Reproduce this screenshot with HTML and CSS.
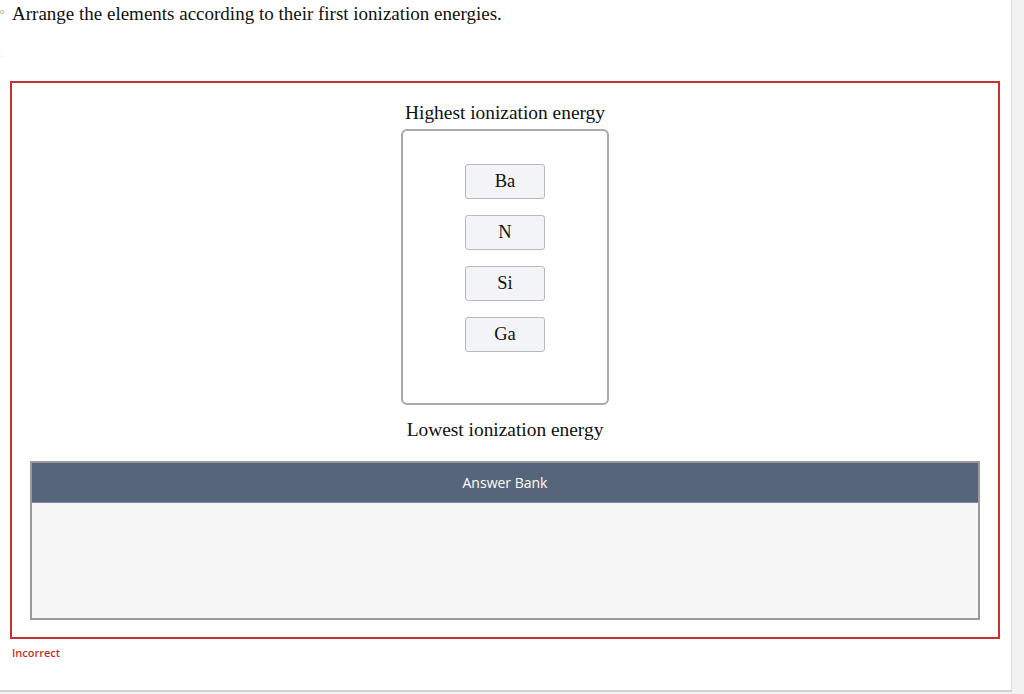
FILE: index.html
```html
<!DOCTYPE html>
<html>
<head>
<meta charset="utf-8">
<link rel="stylesheet" href="styles.css">
</head>
<body>
<div class="page">
  <div class="title"><span class="qnum">o</span>Arrange the elements according to their first ionization energies.</div>
  <div class="side-mark">:</div>
  <div class="question">
    <div class="label">Highest ionization energy</div>
    <div class="target">
      <div class="tile">Ba</div>
      <div class="tile">N</div>
      <div class="tile">Si</div>
      <div class="tile">Ga</div>
    </div>
    <div class="label label-low">Lowest ionization energy</div>
    <div class="bank">
      <div class="bank-head">Answer Bank</div>
      <div class="bank-body"></div>
    </div>
  </div>
  <div class="status">Incorrect</div>
</div>
</body>
</html>
```

FILE: styles.css
```css
html, body {
  margin: 0;
  padding: 0;
  background: #f2f2f2;
}
.page {
  position: relative;
  width: 1011px;
  height: 690px;
  background: #ffffff;
  border-right: 1px solid #dcdcdc;
  border-bottom: 2px solid #d2d2d2;
  overflow: hidden;
  font-family: "Liberation Serif", "Times New Roman", serif;
  color: #111;
}
.title {
  padding: 3px 0 0 12px;
  font-size: 19px;
  line-height: 21px;
  position: relative;
}
.qnum {
  position: absolute;
  left: 0;
  top: 7px;
  font-size: 8px;
  line-height: 10px;
  color: #999;
}
.side-mark {
  position: absolute;
  left: 0;
  top: 48px;
  font-size: 9px;
  line-height: 12px;
  color: #ddd;
}
.question {
  margin: 57px 0 0 10px;
  width: 986px;
  height: 554px;
  border: 2px solid #c8312e;
  padding: 0;
  display: flex;
  flex-direction: column;
  align-items: center;
}
.label {
  margin-top: 19px;
  font-size: 19.4px;
  line-height: 22px;
  text-align: center;
}
.label-low {
  margin-top: 14px;
}
.target {
  margin-top: 5px;
  width: 204px;
  height: 272px;
  border: 2px solid #a9a9a9;
  border-radius: 6px;
  box-sizing: content-box;
  display: flex;
  flex-direction: column;
  align-items: center;
  gap: 16px;
  padding-top: 0;
}
.target .tile:first-child {
  margin-top: 33px;
}
.tile {
  width: 78px;
  height: 33px;
  border: 1px solid #b9b9b9;
  border-radius: 3px;
  background: #f3f4f7;
  font-size: 18.5px;
  line-height: 33px;
  text-align: center;
  color: #111;
}
.bank {
  margin-top: 20px;
  align-self: flex-start;
  margin-left: 18px;
  width: 946px;
  height: 155px;
  border: 2px solid #9a9a9a;
  display: flex;
  flex-direction: column;
}
.bank-head {
  height: 39px;
  background: #566579;
  border-bottom: 1px solid #7e8a9a;
  color: #ffffff;
  font-family: "Open Sans", "Liberation Sans", sans-serif;
  font-size: 14px;
  line-height: 40px;
  text-align: center;
}
.bank-body {
  flex: 1;
  background: #f7f7f7;
}
.status {
  margin: 6px 0 0 12px;
  font-family: "Open Sans", "Liberation Sans", sans-serif;
  font-weight: 600;
  font-size: 11px;
  line-height: 15px;
  color: #c8312e;
}
```
